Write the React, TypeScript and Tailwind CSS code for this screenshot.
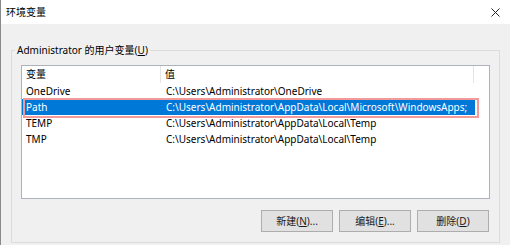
import React from 'react';

type Row = { name: string; value: string; selected?: boolean };

const rows: Row[] = [
  { name: 'OneDrive', value: 'C:\\Users\\Administrator\\OneDrive' },
  { name: 'Path', value: 'C:\\Users\\Administrator\\AppData\\Local\\Microsoft\\WindowsApps;', selected: true },
  { name: 'TEMP', value: 'C:\\Users\\Administrator\\AppData\\Local\\Temp' },
  { name: 'TMP', value: 'C:\\Users\\Administrator\\AppData\\Local\\Temp' },
];

const font = { fontFamily: '"Noto Sans", "Noto Sans CJK SC", sans-serif' };

function DialogButton({ label, mnemonic }: { label: string; mnemonic: string }) {
  return (
    <button
      type="button"
      className="flex h-[22px] w-[72px] items-center justify-center border border-[#adadad] bg-[#e1e1e1] text-[10px] leading-none text-[#1a1a1a]"
    >
      {label}(<span className="underline">{mnemonic}</span>){label === '删除' ? '' : '...'}
    </button>
  );
}

export default function App() {
  return (
    <div
      className="flex h-[245px] w-[510px] flex-col overflow-hidden border-l border-[#8a8a8a] bg-[#f0f0f0] text-black"
      style={font}
    >
      <div className="flex h-[24px] shrink-0 items-center justify-between bg-white pl-[5px] pr-[10px]">
        <span className="text-[10px] leading-none">环境变量</span>
        <svg width="9" height="9" viewBox="0 0 9 9">
          <path d="M0.5 0.5 L8.5 8.5 M8.5 0.5 L0.5 8.5" stroke="#222" strokeWidth="1" fill="none" />
        </svg>
      </div>

      <fieldset className="ml-[10px] mt-[18px] w-[489px] border border-[#dcdcdc] px-[9px] pb-[10px] pt-[7px]">
        <legend className="ml-[-6px] h-[16px] px-[2px] text-[10px] leading-[16px]">
          Administrator 的用户变量(<span className="underline">U</span>)
        </legend>

        <div className="relative h-[134px] w-[469px] border border-[#adb2bb] bg-white text-[10px]">
          <div className="flex h-[17px] items-center">
            <div className="flex h-full w-[139px] shrink-0 items-center border-r border-[#e5e5e5] pl-[4px]">变量</div>
            <div className="flex h-full w-[313px] shrink-0 items-center border-r border-[#e5e5e5] pl-[4px]">值</div>
          </div>
          {rows.map((row) => (
            <div
              key={row.name}
              className={
                row.selected
                  ? 'flex h-[16px] w-[453px] items-center bg-[#0078d7] text-white'
                  : 'flex h-[16px] w-[453px] items-center'
              }
            >
              <div className="w-[140px] shrink-0 pl-[4px] leading-none">{row.name}</div>
              <div className="whitespace-nowrap pl-[4px] leading-none">{row.value}</div>
            </div>
          ))}
          <div className="pointer-events-none absolute left-[1px] top-[32px] h-[20px] w-[456px] border-2 border-[#f29a9a]" />
        </div>

        <div className="mr-[1px] mt-[11px] flex justify-end gap-[6px]">
          <DialogButton label="新建" mnemonic="N" />
          <DialogButton label="编辑" mnemonic="E" />
          <DialogButton label="删除" mnemonic="D" />
        </div>
      </fieldset>
    </div>
  );
}
